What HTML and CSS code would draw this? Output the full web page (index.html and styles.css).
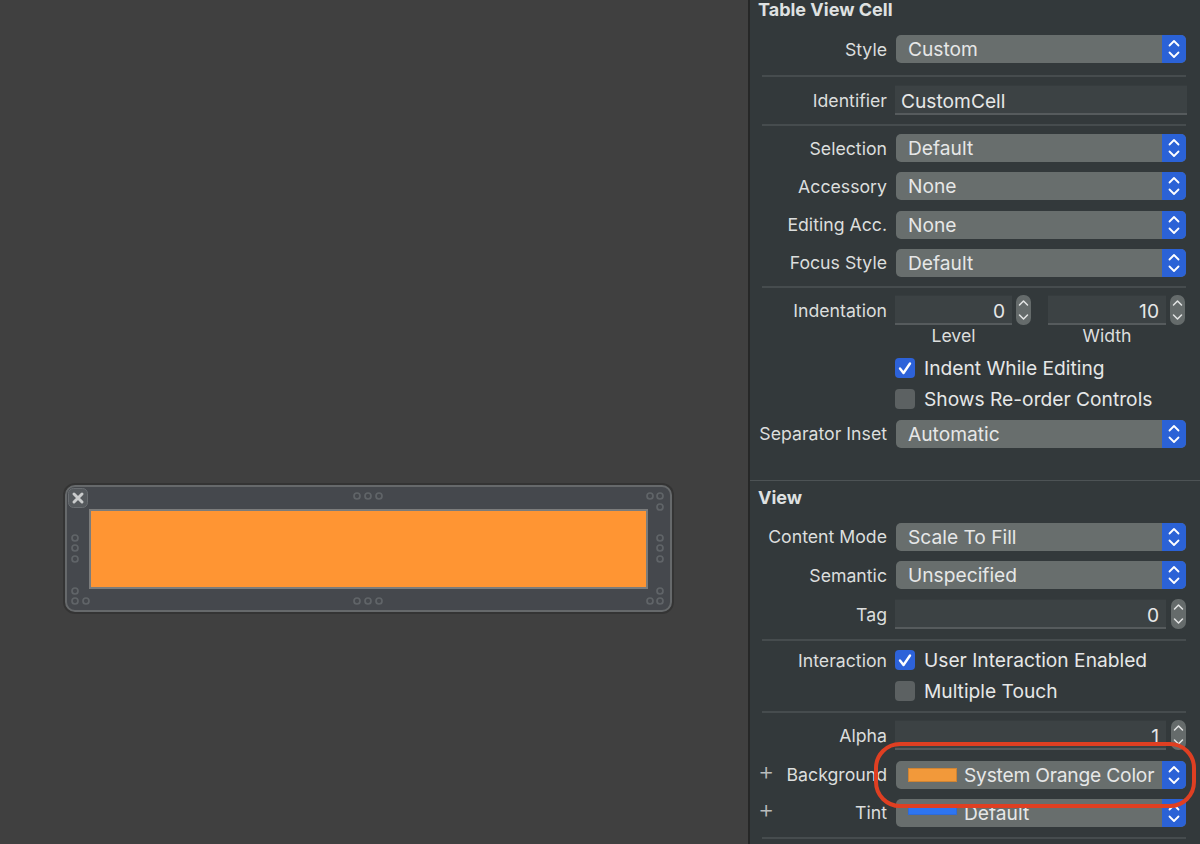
FILE: index.html
```html
<!DOCTYPE html>
<html lang="en">
<head>
<meta charset="utf-8">
<title>Table View Cell</title>
<link rel="stylesheet" href="styles.css">
</head>
<body>
<svg class="defs" width="0" height="0" aria-hidden="true">
  <symbol id="chev" viewBox="0 0 24 28"><path d="M7.5 10.5 12 6l4.5 4.5M7.5 17.5 12 22l4.5-4.5" fill="none" stroke="#fff" stroke-width="1.8" stroke-linecap="round" stroke-linejoin="round"/></symbol>
  <symbol id="step" viewBox="0 0 15 30"><path d="M3.5 10 7.5 6l4 4M3.5 20l4 4 4-4" fill="none" stroke="#e4e6e6" stroke-width="1.5" stroke-linecap="round" stroke-linejoin="round"/></symbol>
  <symbol id="tick" viewBox="0 0 20 20"><path d="M5 10.5 8.5 15 15 5.5" fill="none" stroke="#fff" stroke-width="2.4" stroke-linecap="round" stroke-linejoin="round"/></symbol>
</svg>
<main class="canvas">
  <div class="cell">
    <svg class="handles" viewBox="0 0 611 130" width="611" height="130" aria-hidden="true">
      <g fill="none" stroke="#606468" stroke-width="1.7">
        <circle cx="12" cy="54" r="3"/><circle cx="12" cy="64" r="3"/><circle cx="12" cy="75" r="3"/>
        <circle cx="12" cy="107" r="3"/><circle cx="12" cy="117" r="3"/><circle cx="23" cy="117" r="3"/>
        <circle cx="294" cy="12" r="3"/><circle cx="305" cy="12" r="3"/><circle cx="316" cy="12" r="3"/>
        <circle cx="294" cy="117" r="3"/><circle cx="305" cy="117" r="3"/><circle cx="316" cy="117" r="3"/>
        <circle cx="587" cy="12" r="3"/><circle cx="597" cy="12" r="3"/><circle cx="597" cy="23" r="3"/>
        <circle cx="597" cy="54" r="3"/><circle cx="597" cy="64" r="3"/><circle cx="597" cy="75" r="3"/>
        <circle cx="597" cy="107" r="3"/><circle cx="587" cy="117" r="3"/><circle cx="597" cy="117" r="3"/>
      </g>
      <rect x="5.5" y="4.5" width="19" height="19" rx="5" fill="#55595d" stroke="#696d71"/>
      <path d="M11 10l8 8M19 10l-8 8" stroke="#c9cbcc" stroke-width="3" stroke-linecap="round"/>
    </svg>
    <div class="cell-content"></div>
  </div>
</main>
<aside class="panel">
  <h2 class="head head-first">Table View Cell</h2>

  <div class="row r-style"><span class="label">Style</span>
    <div class="popup"><span class="val">Custom</span><span class="arrows"><svg><use href="#chev"/></svg></span></div></div>
  <hr class="sep s-a">
  <div class="row r-field"><span class="label">Identifier</span>
    <div class="field field-wide left">CustomCell</div></div>
  <hr class="sep s-b">

  <div class="row r-sel"><span class="label">Selection</span>
    <div class="popup"><span class="val">Default</span><span class="arrows"><svg><use href="#chev"/></svg></span></div></div>
  <div class="row r-pop"><span class="label">Accessory</span>
    <div class="popup"><span class="val">None</span><span class="arrows"><svg><use href="#chev"/></svg></span></div></div>
  <div class="row r-pop"><span class="label">Editing Acc.</span>
    <div class="popup"><span class="val">None</span><span class="arrows"><svg><use href="#chev"/></svg></span></div></div>
  <div class="row r-pop"><span class="label">Focus Style</span>
    <div class="popup"><span class="val">Default</span><span class="arrows"><svg><use href="#chev"/></svg></span></div></div>
  <hr class="sep s-c">

  <div class="row r-indent"><span class="label">Indentation</span>
    <div class="pair">
      <div class="field field-num">0</div><span class="stepper"><svg><use href="#step"/></svg></span>
      <div class="field field-num f2">10</div><span class="stepper"><svg><use href="#step"/></svg></span>
    </div></div>
  <div class="sublabels"><span class="sub">Level</span><span class="sub sub2">Width</span></div>

  <div class="check r-c1"><span class="box on"><svg><use href="#tick"/></svg></span><span>Indent While Editing</span></div>
  <div class="check r-c2"><span class="box"></span><span>Shows Re-order Controls</span></div>
  <div class="row r-inset"><span class="label">Separator Inset</span>
    <div class="popup"><span class="val">Automatic</span><span class="arrows"><svg><use href="#chev"/></svg></span></div></div>

  <div class="divider"></div>
  <h2 class="head head-view">View</h2>

  <div class="row r-mode"><span class="label">Content Mode</span>
    <div class="popup"><span class="val">Scale To Fill</span><span class="arrows"><svg><use href="#chev"/></svg></span></div></div>
  <div class="row r-pop"><span class="label">Semantic</span>
    <div class="popup"><span class="val">Unspecified</span><span class="arrows"><svg><use href="#chev"/></svg></span></div></div>
  <div class="row r-tag"><span class="label">Tag</span>
    <div class="field field-long">0</div><span class="stepper st-gap"><svg><use href="#step"/></svg></span></div>
  <hr class="sep s-d">
  <div class="check r-c3"><span class="label">Interaction</span><span class="box on"><svg><use href="#tick"/></svg></span><span>User Interaction Enabled</span></div>
  <div class="check r-c2 in-row"><span class="box"></span><span>Multiple Touch</span></div>
  <hr class="sep s-e">
  <div class="row r-alpha"><span class="label">Alpha</span>
    <div class="field field-long">1</div><span class="stepper st-gap"><svg><use href="#step"/></svg></span></div>
  <div class="row r-bg"><span class="label"><span class="plus">+</span>Background</span>
    <div class="popup"><span class="swatch orange"></span><span class="val-c tight">System Orange Color</span><span class="arrows"><svg><use href="#chev"/></svg></span></div></div>
  <div class="row r-tint"><span class="label"><span class="plus">+</span>Tint</span>
    <div class="popup"><span class="swatch blue"></span><span class="val-c">Default</span><span class="arrows"><svg><use href="#chev"/></svg></span></div></div>
  <hr class="sep s-f">
  <div class="callout"></div>
</aside>
</body>
</html>
```

FILE: styles.css
```css
* { box-sizing: border-box; }
html, body { margin: 0; height: 844px; overflow: hidden; }
body {
  display: flex;
  width: 1200px;
  background: #404040;
  font-family: Inter, "Liberation Sans", sans-serif;
  font-size: 17.7px;
  color: #e6e7e7;
}
.defs { position: absolute; }

/* Canvas */
.canvas { width: 748px; flex: none; padding: 485px 0 0 65px; }
.cell {
  position: relative;
  width: 607px;
  height: 127px;
  padding: 21.5px 0 0 21.5px;
  background: #45484d;
  border: 2px solid #66696b;
  border-radius: 10px;
  box-shadow: 0 0 0 2px #343434;
}
.handles { position: absolute; left: -4px; top: -3px; }
.cell-content {
  height: 80px;
  width: 559px;
  background: #ff9533;
  border: 2px solid #7b7c7c;
}

/* Panel */
.panel {
  position: relative;
  width: 452px;
  flex: none;
  height: 844px;
  background: #33393b;
  border-left: 2px solid #262727;
  overflow: hidden;
}
.head { margin: 0; font-size: 18px; font-weight: 700; color: #dfe1e1; height: 18px; line-height: 20px; padding-left: 8px; }
.head-view { margin-top: 7px; }

.row { display: flex; align-items: center; }
.label {
  flex: none;
  width: 137px;
  display: flex;
  justify-content: flex-end;
  margin-right: 9px;
  color: #dcdedd;
  white-space: nowrap;
}
.r-indent .label, .r-alpha .label { padding-top: 2px; }
.plus { margin: -3px auto 0 0; padding-left: 8px; font-size: 25px; line-height: 20px; font-weight: 300; color: #b9bcbc; }

.popup {
  display: flex;
  align-items: center;
  width: 290px;
  height: 28px;
  font-size: 19.2px;
  background: #686e6d;
  border-radius: 5px;
  overflow: hidden;
  white-space: nowrap;
}
.val { flex: 1; padding-left: 12px; }
.val-c { flex: 1; padding-left: 7px; }
.tight { letter-spacing: -0.2px; }
.arrows { flex: none; width: 24px; height: 28px; background: #2b62d6; }
.arrows svg { display: block; width: 24px; height: 28px; }

.swatch { flex: none; width: 49px; margin-left: 12px; border: 1px solid #d08433; }
.orange { height: 14px; background: #f2993a; }
.blue { height: 11px; margin-top: -6px; background: #2e75f0; border-color: #2e6bd8; }

.field {
  height: 30px;
  line-height: 30px;
  font-size: 19.2px;
  background: #3c4244;
  border-top: 1px solid #363c3e;
  border-bottom: 2px solid #565b5d;
  padding: 0 7px;
  text-align: right;
  white-space: nowrap;
}
.field.left { text-align: left; padding-left: 6px; }
.field-wide { width: 292px; margin-left: -1px; }
.field-num { width: 117px; }
.field-long { width: 271px; margin-left: -1px; }
.f2 { width: 118px; margin-left: 17px; }
.pair { display: flex; align-items: center; margin-left: -1px; }
.stepper { flex: none; width: 15px; height: 30px; margin-left: 4px; background: #656b6b; border-radius: 7px; }
.stepper svg { display: block; width: 15px; height: 30px; }
.st-gap { margin-left: 5px; }

.sublabels { display: flex; padding-left: 145px; margin-top: 1px; height: 20px; line-height: 20px; color: #dcdedd; }
.sub { width: 117px; text-align: center; }
.sub2 { width: 118px; margin-left: 36px; }

.check { display: flex; align-items: center; height: 20px; padding-left: 145px; font-size: 19.2px; white-space: nowrap; }
.check .label { font-size: 17.7px; margin-left: -145px; margin-right: 8px; }
.box { flex: none; width: 20px; height: 20px; margin-right: 9px; border-radius: 4px; background: #5c6162; }
.box.on { background: #2d62d9; }
.box svg { display: block; width: 20px; height: 20px; }

.sep { margin: 0 0 0 12px; width: 424px; height: 2px; border: 0; background: #464c4e; }
.divider { height: 1px; margin-top: 32px; background: #4d5355; }

.r-style { margin-top: 17px; }
.s-a { margin-top: 12px; }
.r-field { margin-top: 8px; }
.s-b { margin-top: 9px; }
.r-sel { margin-top: 8px; }
.r-pop { margin-top: 10.3px; }
.s-c { margin-top: 9px; }
.r-indent { margin-top: 7px; }
.r-c1 { margin-top: 12px; }
.r-c2 { margin-top: 11px; }
.r-inset { margin-top: 11px; }
.r-mode { margin-top: 17px; }
.r-tag { margin-top: 10px; }
.s-d { margin-top: 10px; }
.r-c3 { margin-top: 9px; }
.s-e { margin-top: 9.5px; }
.r-alpha { margin-top: 7.2px; }
.r-bg { margin-top: 11px; }
.r-tint { margin-top: 10px; }
.s-f { margin-top: 10px; }

/* Red annotation drawn over the panel */
.callout {
  position: absolute;
  left: 124px;
  top: 742px;
  width: 322px;
  height: 66px;
  border: 4px solid #df3f22;
  border-radius: 26px;
}
```
